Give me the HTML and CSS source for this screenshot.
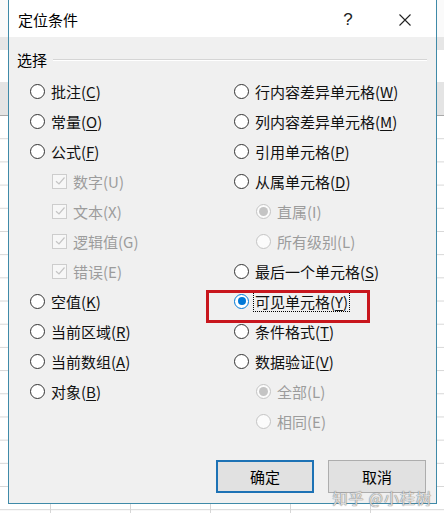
FILE: index.html
```html
<!DOCTYPE html>
<html lang="zh-CN">
<head>
<meta charset="utf-8">
<title>定位条件</title>
<link rel="stylesheet" href="styles.css">
</head>
<body>
<div class="sheet">
  <div class="s-top"></div>
  <div class="s-band"></div>
  <div class="s-gap"></div>
  <div class="s-head"></div>
  <div class="s-grid"></div>
</div>

<div class="dialog">
  <div class="titlebar">
    <span class="title">定位条件</span>
    <span class="help">?</span>
    <svg class="close" width="12" height="12" viewBox="0 0 12 12"><path d="M0.5 0.5 L11.5 11.5 M11.5 0.5 L0.5 11.5" stroke="#222" stroke-width="1.1" fill="none"/></svg>
  </div>
  <div class="body">
    <div class="group-label"><span>选择</span><span class="rule"></span></div>
    <div class="cols">
      <div class="col">
        <div class="item"><span class="radio"></span><span class="lbl">批注(<u>C</u>)</span></div>
        <div class="item"><span class="radio"></span><span class="lbl">常量(<u>O</u>)</span></div>
        <div class="item"><span class="radio"></span><span class="lbl">公式(<u>F</u>)</span></div>
        <div class="item sub dis"><span class="check"><svg width="12" height="12" viewBox="0 0 12 12"><path d="M2 6.2 L5 9 L10.5 2.5" stroke="#c4c4c4" stroke-width="1.2" fill="none"/></svg></span><span class="lbl">数字(U)</span></div>
        <div class="item sub dis"><span class="check"><svg width="12" height="12" viewBox="0 0 12 12"><path d="M2 6.2 L5 9 L10.5 2.5" stroke="#c4c4c4" stroke-width="1.2" fill="none"/></svg></span><span class="lbl">文本(X)</span></div>
        <div class="item sub dis"><span class="check"><svg width="12" height="12" viewBox="0 0 12 12"><path d="M2 6.2 L5 9 L10.5 2.5" stroke="#c4c4c4" stroke-width="1.2" fill="none"/></svg></span><span class="lbl">逻辑值(G)</span></div>
        <div class="item sub dis"><span class="check"><svg width="12" height="12" viewBox="0 0 12 12"><path d="M2 6.2 L5 9 L10.5 2.5" stroke="#c4c4c4" stroke-width="1.2" fill="none"/></svg></span><span class="lbl">错误(E)</span></div>
        <div class="item"><span class="radio"></span><span class="lbl">空值(<u>K</u>)</span></div>
        <div class="item"><span class="radio"></span><span class="lbl">当前区域(<u>R</u>)</span></div>
        <div class="item"><span class="radio"></span><span class="lbl">当前数组(<u>A</u>)</span></div>
        <div class="item"><span class="radio"></span><span class="lbl">对象(<u>B</u>)</span></div>
      </div>
      <div class="col">
        <div class="item"><span class="radio"></span><span class="lbl">行内容差异单元格(<u>W</u>)</span></div>
        <div class="item"><span class="radio"></span><span class="lbl">列内容差异单元格(<u>M</u>)</span></div>
        <div class="item"><span class="radio"></span><span class="lbl">引用单元格(<u>P</u>)</span></div>
        <div class="item"><span class="radio"></span><span class="lbl">从属单元格(<u>D</u>)</span></div>
        <div class="item sub dis"><span class="radio on"></span><span class="lbl">直属(I)</span></div>
        <div class="item sub dis"><span class="radio"></span><span class="lbl">所有级别(L)</span></div>
        <div class="item"><span class="radio"></span><span class="lbl">最后一个单元格(<u>S</u>)</span></div>
        <div class="item marked"><span class="radio on"></span><span class="lbl focus">可见单元格(<u>Y</u>)</span><span class="redbox"></span></div>
        <div class="item"><span class="radio"></span><span class="lbl">条件格式(<u>T</u>)</span></div>
        <div class="item"><span class="radio"></span><span class="lbl">数据验证(<u>V</u>)</span></div>
        <div class="item sub dis"><span class="radio on"></span><span class="lbl">全部(L)</span></div>
        <div class="item sub dis"><span class="radio"></span><span class="lbl">相同(E)</span></div>
      </div>
    </div>
    <div class="buttons">
      <span class="btn default">确定</span>
      <span class="btn">取消</span>
    </div>
  </div>
  <span class="watermark">知乎 @小桂树</span>
</div>
</body>
</html>
```
FILE: styles.css
```css
html, body {
  margin: 0;
  padding: 0;
}
body {
  width: 444px;
  height: 513px;
  overflow: hidden;
  position: relative;
  font-family: "Noto Sans CJK SC", "Noto Sans", sans-serif;
  font-size: 15px;
  color: #111;
}

/* background spreadsheet */
.sheet {
  width: 444px;
  height: 513px;
  display: flex;
  flex-direction: column;
  background: #fff;
}
.s-top { height: 37px; background: #fafafa; }
.s-band { height: 13px; background: #e6e6e6; }
.s-gap { height: 32px; background: #fff; }
.s-head { height: 33px; background: #e4e4e4; border-bottom: 1px solid #a9a9a9; }
.s-grid {
  flex: 1;
  background-color: #fff;
  background-image:
    linear-gradient(to right, #d6d6d6 1px, transparent 1px),
    linear-gradient(to bottom, transparent 22px, #d6d6d6 22px);
  background-size: 80px 100%, 100% 23.2px;
  background-position: 50px 0, 0 0;
}

/* dialog */
.dialog {
  position: absolute;
  left: 8px;
  top: -1px;
  width: 429px;
  height: 505px;
  box-sizing: border-box;
  border: 1px solid #3f8aa8;
  background: #f0f0f0;
  display: flex;
  flex-direction: column;
}
.titlebar {
  height: 37px;
  background: #fff;
  display: flex;
  align-items: center;
  padding: 2px 25px 0 9px;
  box-sizing: border-box;
}
.title {
  flex: 1;
  font-size: 15px;
  color: #000;
}
.help {
  width: 20px;
  text-align: center;
  font-size: 17px;
  color: #222;
  font-family: "Liberation Sans", sans-serif;
}
.close {
  margin-left: 41px;
  display: block;
}

.body {
  flex: 1;
  display: flex;
  flex-direction: column;
}
.group-label {
  margin-top: 12px;
  height: 20px;
  display: flex;
  align-items: center;
  padding: 0 9px 0 8px;
  gap: 6px;
  color: #000;
}
.rule {
  flex: 1;
  height: 1px;
  background: #d5d5d5;
  border-bottom: 1px solid #fff;
  margin-top: 1px;
}

.cols {
  margin-top: 7px;
  display: grid;
  grid-template-columns: 204px 1fr;
  padding-left: 21px;
}
.item {
  height: 30px;
  display: flex;
  align-items: center;
  gap: 6px;
  position: relative;
  color: #111;
}
.item.sub {
  padding-left: 22px;
}
.item.dis {
  color: #9c9c9c;
}
.lbl {
  white-space: nowrap;
  line-height: 19px;
}
.lbl u {
  text-decoration-thickness: 1px;
  text-underline-offset: 2px;
}

.radio {
  width: 15px;
  height: 15px;
  box-sizing: border-box;
  border: 1px solid #333;
  border-radius: 50%;
  background: #fff;
  flex: none;
  display: flex;
  align-items: center;
  justify-content: center;
}
.radio.on::after {
  content: "";
  width: 8px;
  height: 8px;
  border-radius: 50%;
  background: #0078d7;
}
.marked .radio.on {
  border-color: #0078d7;
}
.dis .radio {
  border-color: #c4c4c4;
  background: #fbfbfb;
}
.dis .radio.on::after {
  background: #c4c4c4;
  width: 9px;
  height: 9px;
}

.check {
  width: 15px;
  height: 15px;
  box-sizing: border-box;
  border: 1px solid #cdcdcd;
  background: #f7f7f7;
  flex: none;
  display: flex;
  align-items: center;
  justify-content: center;
}
.check svg { display: block; }

.focus {
  outline: 1px dotted #000;
  outline-offset: 0;
  padding: 0 1px;
  margin-left: -1px;
}
.redbox {
  position: absolute;
  left: -28px;
  top: 4px;
  width: 164px;
  height: 33px;
  box-sizing: border-box;
  border: 3px solid #c8161d;
  pointer-events: none;
}

.buttons {
  margin-top: 24px;
  display: flex;
  justify-content: flex-end;
  gap: 14px;
  padding-right: 10px;
}
.btn {
  width: 98px;
  height: 33px;
  box-sizing: border-box;
  border: 1px solid #adadad;
  background: #e1e1e1;
  display: flex;
  align-items: center;
  justify-content: center;
  color: #000;
}
.btn.default {
  border: 2px solid #1d72b5;
}

.watermark {
  position: absolute;
  right: 4px;
  bottom: -5px;
  font-size: 15px;
  line-height: 20px;
  color: rgba(255, 255, 255, 0.75);
  text-shadow: 0 0 1px #777, 0 0 1px #777;
  white-space: nowrap;
  letter-spacing: 1px;
}
```
